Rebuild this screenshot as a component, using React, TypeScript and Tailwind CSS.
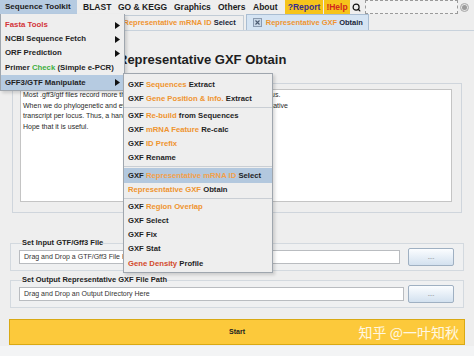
import React from 'react';
import { Search } from 'lucide-react';

const O = ({ children }: { children: React.ReactNode }) => (
  <span className="text-[#ef9430]">{children}</span>
);

const MenuArrow = () => (
  <svg width="5" height="7" viewBox="0 0 5 7" className="ml-auto mr-[4px]">
    <path d="M0 0 L5 3.5 L0 7 Z" fill="#111" />
  </svg>
);

const Sep = () => <div className="my-[1px] h-px bg-[#c9ced4]" />;

const SubItem = ({ children, className = 'h-[14px]' }: { children: React.ReactNode; className?: string }) => (
  <div className={`flex items-center pl-[4px] ${className}`}>{children}</div>
);

const TabClose = () => (
  <span className="mr-[4px] flex h-[9px] w-[9px] items-center justify-center border border-[#8a9bb0] bg-[#c9d8e8]">
    <svg width="5" height="5" viewBox="0 0 5 5">
      <path d="M0.5 0.5 L4.5 4.5 M4.5 0.5 L0.5 4.5" stroke="#4a5a70" strokeWidth="1.1" />
    </svg>
  </span>
);

const FileGroup = ({ label, placeholder, inputClass }: { label: string; placeholder: string; inputClass: string }) => (
  <fieldset className="mx-[10px] border border-[#d3d9df] bg-[#eff0f1] px-[8px] pb-[4px]">
    <legend className="ml-[3px] text-[7.5px] font-bold leading-[10px] text-[#222]">{label}</legend>
    <div className="flex items-center">
      <div className={`flex h-[14px] items-center border border-[#b9bcc0] bg-white pl-[4px] text-[7px] text-[#333] ${inputClass}`}>
        {placeholder}
      </div>
      <button className="flex h-[18px] w-[46px] items-center justify-center rounded-[2px] border border-[#9fb0c2] bg-gradient-to-b from-[#fbfdff] to-[#d3e1ef] text-[6px] text-[#333]">
        ....
      </button>
    </div>
  </fieldset>
);

export default function App() {
  return (
    <div className="relative flex h-[356px] w-[474px] flex-col overflow-hidden bg-[#eeeeee] font-['Liberation_Sans',Arial,sans-serif] text-[#222]">
      {/* menu bar */}
      <div className="flex h-[14px] shrink-0 items-stretch text-[8.5px] font-bold text-[#1c1c1c]">
        <div className="flex w-[77px] items-center bg-[#b6cbe1] pl-[5px] text-[8px]">Sequence Toolkit</div>
        <div className="ml-[6px] flex w-[35px] items-center">BLAST</div>
        <div className="flex w-[56px] items-center">GO &amp; KEGG</div>
        <div className="flex w-[44px] items-center">Graphics</div>
        <div className="flex w-[35px] items-center">Others</div>
        <div className="flex w-[32px] items-center">About</div>
        <div className="flex w-[38px] items-center justify-center bg-[#f6c41b] text-[#3a2f8c]">?Report</div>
        <div className="ml-[1px] flex w-[26px] items-center justify-center bg-[#f6c41b] text-[#d2261e]">!Help</div>
        <div className="ml-[2px] flex items-center">
          <Search size={9} strokeWidth={3.2} color="#111" />
        </div>
        <div className="ml-[4px] w-[93px] border border-dashed border-[#9a9a9a] bg-[#f3f3f3]" />
        <div className="ml-[2px] flex items-center">
          <span className="flex h-[9px] w-[9px] items-center justify-center rounded-full border border-[#a8a8a8] bg-[#e4e4e4]">
            <span className="h-[5px] w-[5px] rounded-full bg-[#9a9a9a]" />
          </span>
        </div>
      </div>

      {/* tab bar */}
      <div className="flex h-[17px] shrink-0 items-end border-b border-[#c8d2dc] pl-[88px] text-[7.5px] font-bold">
        <div className="flex h-[15px] items-center border border-b-0 border-[#c2ccd6] bg-[#eeeeee] pl-[4px] pr-[7px]">
          <TabClose />
          <span className="text-[#1a2538]">GXF </span>
          <O>&nbsp;Representative mRNA ID</O>
          <span className="text-[#1a2538]">&nbsp;Select</span>
        </div>
        <div className="ml-[2px] flex h-[16px] items-center border border-b-0 border-[#a9bdd2] bg-[#d5e4f3] pl-[6px] pr-[5px]">
          <TabClose />
          <O>Representative GXF</O>
          <span className="text-[#1a2538]">&nbsp;Obtain</span>
        </div>
      </div>

      {/* content */}
      <div className="flex flex-1 flex-col">
        <h1 className="pl-[118px] pt-[21px] text-[13px] font-bold leading-[16px] text-[#1e1e1e]">Representative GXF Obtain</h1>

        <div className="mx-[12px] mt-[15px] h-[130px] border border-[#cfd5dc] pb-[10px] pl-[7px] pr-[9px] pt-[5px]">
          <div className="h-full border border-[#c4c4c4] bg-white pl-[2px] text-[7px] leading-[10.5px] text-[#2a2a2a]">
            <p>Most .gff3/gtf files record more than one mRNA/transcript for each annotated locus.</p>
            <p>When we do phylogenetic and evolution analysis, we usually need one representative</p>
            <p>transcript per locus. Thus, a handy function is provided here.</p>
            <p>Hope that it is useful.</p>
          </div>
        </div>

        <div className="mt-[25px]">
          <FileGroup label="Set Input GTF/Gff3 File" placeholder="Drag and Drop a GTF/Gff3 File Here" inputClass="w-[381px] mr-[8px]" />
        </div>
        <div className="mt-[4px]">
          <FileGroup label="Set Output Representative GXF File Path" placeholder="Drag and Drop an Output Directory Here" inputClass="w-[385px] mr-[4px]" />
        </div>

        <div className="relative mx-[9px] mt-[11px] flex h-[26px] items-center justify-center border border-[#d9a914] bg-[#fcc93b] text-[7px] font-bold text-[#222]">
          Start
          <span className="absolute right-[5px] top-[3px] font-['Noto_Sans_CJK_SC',sans-serif] text-[14px] font-normal leading-[18px] text-white/85">
            知乎 @一叶知秋
          </span>
        </div>
        <div className="mt-auto h-[10px] bg-[#f3f4f5]" />
      </div>

      {/* main dropdown menu */}
      <div className="absolute left-0 top-[14px] h-[77px] w-[125px] border border-t-0 border-[#9fa6ae] bg-[#eeeeee] pt-[4px] text-[7.8px] font-bold text-[#1f1f1f] shadow-[2px_2px_3px_rgba(0,0,0,0.15)]">
        <div className="flex h-[14px] items-center pl-[4px] text-[#d3343a]">Fasta Tools<MenuArrow /></div>
        <div className="flex h-[14px] items-center pl-[4px]">NCBI Sequence Fetch<MenuArrow /></div>
        <div className="flex h-[14px] items-center pl-[4px]">ORF Prediction<MenuArrow /></div>
        <div className="flex h-[15px] items-center pl-[4px]">
          Primer&nbsp;<span className="text-[#3fae3f]">Check</span>&nbsp;(Simple e-PCR)
        </div>
        <div className="flex h-[15px] items-center bg-[#b6cbe1] pl-[4px]">GFF3/GTF Manipulate<MenuArrow /></div>
      </div>

      {/* submenu */}
      <div className="absolute left-[123px] top-[73px] w-[150px] border border-[#9fa6ae] bg-[#eeeeee] pb-[1px] pt-[4px] text-[7.7px] font-bold text-[#1f1f1f] shadow-[2px_2px_3px_rgba(0,0,0,0.15)]">
        <SubItem>GXF&nbsp;<O>Sequences</O>&nbsp;Extract</SubItem>
        <SubItem>GXF&nbsp;<O>Gene Position &amp; Info.</O>&nbsp;Extract</SubItem>
        <Sep />
        <SubItem>GXF&nbsp;<O>Re-build</O>&nbsp;from Sequences</SubItem>
        <SubItem>GXF&nbsp;<O>mRNA Feature</O>&nbsp;Re-calc</SubItem>
        <SubItem>GXF&nbsp;<O>ID Prefix</O></SubItem>
        <SubItem>GXF Rename</SubItem>
        <Sep />
        <SubItem className="h-[15px] bg-[#b3c8de]">GXF&nbsp;<span className="text-[#f4a04a]">Representative mRNA ID</span>&nbsp;Select</SubItem>
        <SubItem><O>Representative GXF</O>&nbsp;Obtain</SubItem>
        <Sep />
        <SubItem>GXF&nbsp;<O>Region Overlap</O></SubItem>
        <SubItem>GXF Select</SubItem>
        <SubItem>GXF Fix</SubItem>
        <SubItem>GXF Stat</SubItem>
        <SubItem className="h-[15px]"><span className="text-[#d24b2c]">Gene Density</span>&nbsp;Profile</SubItem>
      </div>
    </div>
  );
}
